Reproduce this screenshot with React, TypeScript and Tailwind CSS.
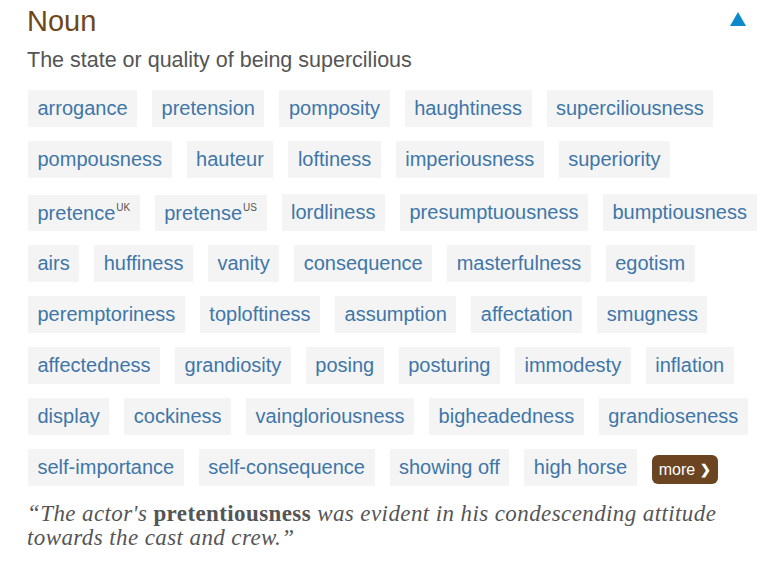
const words: { w: string; sup?: string }[] = [
  { w: 'arrogance' },
  { w: 'pretension' },
  { w: 'pomposity' },
  { w: 'haughtiness' },
  { w: 'superciliousness' },
  { w: 'pompousness' },
  { w: 'hauteur' },
  { w: 'loftiness' },
  { w: 'imperiousness' },
  { w: 'superiority' },
  { w: 'pretence', sup: 'UK' },
  { w: 'pretense', sup: 'US' },
  { w: 'lordliness' },
  { w: 'presumptuousness' },
  { w: 'bumptiousness' },
  { w: 'airs' },
  { w: 'huffiness' },
  { w: 'vanity' },
  { w: 'consequence' },
  { w: 'masterfulness' },
  { w: 'egotism' },
  { w: 'peremptoriness' },
  { w: 'toploftiness' },
  { w: 'assumption' },
  { w: 'affectation' },
  { w: 'smugness' },
  { w: 'affectedness' },
  { w: 'grandiosity' },
  { w: 'posing' },
  { w: 'posturing' },
  { w: 'immodesty' },
  { w: 'inflation' },
  { w: 'display' },
  { w: 'cockiness' },
  { w: 'vaingloriousness' },
  { w: 'bigheadedness' },
  { w: 'grandioseness' },
  { w: 'self-importance' },
  { w: 'self-consequence' },
  { w: 'showing off' },
  { w: 'high horse' },
]

function Chip({ w, sup }: { w: string; sup?: string }) {
  return (
    <a
      href="#"
      className={
        'block whitespace-nowrap bg-[#f4f4f4] px-[9.5px] text-[20px] text-[#4076a8] ' +
        (sup ? 'mt-[3px] h-[36px] leading-[36px]' : 'h-[37px] leading-[37px]')
      }
    >
      {w}
      {sup && (
        <span className="relative -top-[9px] ml-[1px] text-[10px] leading-none text-[#555]">{sup}</span>
      )}
    </a>
  )
}

export default function App() {
  return (
    <div className="min-h-[568px] bg-white pl-[27px] pr-[4px] pt-[4px] font-['Liberation_Sans',Arial,sans-serif]">
      <div className="flex items-start justify-between">
        <h2 className="text-[29px] leading-[35px] text-[#6f4719]">Noun</h2>
        <button type="button" aria-label="Collapse" className="mr-[20px] mt-[8px]">
          <svg width="16" height="14" viewBox="0 0 16 14" aria-hidden="true">
            <polygon points="8,0 16,14 0,14" fill="#0b8acb" />
          </svg>
        </button>
      </div>

      <p className="mt-[9px] text-[21.5px] leading-[24px] text-[#555]">
        The state or quality of being supercilious
      </p>

      <div className="mt-[18px] flex flex-wrap items-end gap-x-[15px] gap-y-[14px] pl-[1px]">
        {words.map((x) => (
          <Chip key={x.w} w={x.w} sup={x.sup} />
        ))}
        <button
          type="button"
          className="mb-[2px] flex h-[29px] items-center gap-[5px] rounded-[6px] bg-[#6b4422] px-[7px] text-[16px] text-white"
        >
          more
          <span className="text-[13px] font-bold">❯</span>
        </button>
      </div>

      <p className="mt-[16px] font-['Liberation_Serif',Georgia,serif] text-[23px] italic leading-[24px] tracking-[0.4px] text-[#555]">
        “The actor's <b className="not-italic">pretentiousness</b> was evident in his condescending attitude
        <br />
        towards the cast and crew.”
      </p>
    </div>
  )
}
